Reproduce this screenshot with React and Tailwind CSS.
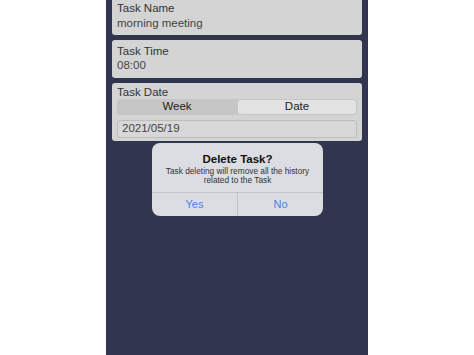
import React from "react";

export default function App() {
  const font = { fontFamily: '"Liberation Sans", Arial, sans-serif' };
  return (
    <div className="relative w-[474px] h-[355px] bg-white flex justify-center overflow-hidden" style={font}>
      <div className="w-[262px] h-full bg-[#31364e] px-[6px] flex flex-col gap-[5px]">
        <div className="h-[35px] bg-[#d4d4d4] rounded-b-[3px] px-[5px] pt-[1px] flex flex-col">
          <div className="text-[11.5px] leading-[14px] text-[#333]">Task Name</div>
          <div className="text-[11.5px] leading-[14px] text-[#444] mt-[1px]">morning meeting</div>
        </div>
        <div className="h-[38px] bg-[#d4d4d4] rounded-[3px] px-[5px] pt-[4px] flex flex-col">
          <div className="text-[11.5px] leading-[14px] text-[#333]">Task Time</div>
          <div className="text-[11.5px] leading-[14px] text-[#444]">08:00</div>
        </div>
        <div className="h-[58px] bg-[#d4d4d4] rounded-[3px] px-[5px] pt-[3px] flex flex-col">
          <div className="text-[11.5px] leading-[13px] text-[#333]">Task Date</div>
          <div className="h-[16px] flex rounded-[4px] bg-[#c6c6c6] overflow-hidden">
            <div className="w-[120px] flex items-center justify-center text-[11.5px] text-[#222]">Week</div>
            <div className="flex-1 flex items-center justify-center text-[11.5px] text-[#222] bg-[#e3e3e3] rounded-[4px] border border-[#c6c6c6]">Date</div>
          </div>
          <div className="mt-[5px] h-[18px] border border-[#bdbdbd] rounded-[3px] bg-[#d8d8d8] px-[4px] flex items-center text-[11.5px] text-[#444]">2021/05/19</div>
        </div>
      </div>
      <div className="absolute left-[152px] top-[143px] w-[171px] h-[73px] bg-[#dcdde2] rounded-[8px] flex flex-col">
        <div className="flex-1 flex flex-col items-center pt-[10px]">
          <div className="text-[11.5px] leading-[13px] font-bold text-[#111]">Delete Task?</div>
          <div className="text-[8.3px] leading-[9px] text-[#333] text-center mt-[1px] px-[2px]">
            Task deleting will remove all the history<br />related to the Task
          </div>
        </div>
        <div className="h-[24px] flex border-t border-[#c3c4ca]">
          <div className="w-[86px] flex items-center justify-center text-[11px] text-[#3c86e6] border-r border-[#c3c4ca]">Yes</div>
          <div className="flex-1 flex items-center justify-center text-[11px] text-[#3c86e6]">No</div>
        </div>
      </div>
    </div>
  );
}
